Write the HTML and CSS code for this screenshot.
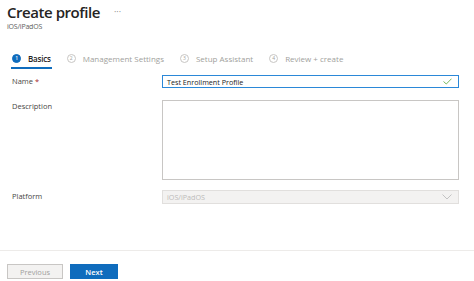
FILE: index.html
```html
<!DOCTYPE html>
<html lang="en">

<head>
    <meta charset="UTF-8">
    <meta name="viewport" content="width=device-width, initial-scale=1.0">
    <title>Create profile</title>
    <link rel="stylesheet" href="styles.css">
</head>

<body>
    <div class="header">
        <div class="title-row">
            <h1 class="title">Create profile</h1>
            <span class="more">&middot;&middot;&middot;</span>
        </div>
        <div class="subtitle">iOS/iPadOS</div>
    </div>

    <!-- 步骤条 -->
    <ul class="steps">
        <li class="step active"><span class="num">1</span>Basics</li>
        <li class="step"><span class="num">2</span>Management Settings</li>
        <li class="step"><span class="num">3</span>Setup Assistant</li>
        <li class="step"><span class="num">4</span>Review + create</li>
    </ul>

    <div class="form">
        <div class="row">
            <label class="label">Name <span class="req">*</span></label>
            <div class="field input valid">
                <span>Test Enrollment Profile</span>
                <svg class="check" width="9" height="7" viewBox="0 0 9 7"><path d="M0.5 3.5 L3.3 6 L8.5 0.7" fill="none" stroke="#6bb24a" stroke-width="0.9"/></svg>
            </div>
        </div>
        <div class="row">
            <label class="label">Description</label>
            <div class="field textarea"></div>
        </div>
        <div class="row">
            <label class="label">Platform</label>
            <div class="field input disabled">
                <span>iOS/iPadOS</span>
                <svg class="chev" width="10" height="6" viewBox="0 0 10 6"><path d="M0.5 0.5 L5 5 L9.5 0.5" fill="none" stroke="#bdbdbd" stroke-width="0.9"/></svg>
            </div>
        </div>
    </div>

    <div class="footer">
        <button class="btn prev" disabled>Previous</button>
        <button class="btn next">Next</button>
    </div>
</body>

</html>
```

FILE: styles.css
```css
* {
    margin: 0;
    padding: 0;
    box-sizing: border-box;
}

body {
    width: 474px;
    height: 281px;
    font-family: "Open Sans", "Noto Sans", sans-serif;
    font-size: 7.5px;
    color: #484644;
    background-color: #fff;
    overflow: hidden;
}

.header {
    padding: 2px 7px 0;
}

.title-row {
    display: flex;
    align-items: center;
}

.title {
    font-size: 15px;
    font-weight: 600;
    line-height: 20px;
    color: #252423;
    letter-spacing: -0.45px;
}

.more {
    margin-left: 14px;
    font-size: 9px;
    line-height: 8px;
    color: #8a8886;
}

.subtitle {
    font-size: 7px;
    line-height: 9px;
    color: #605e5c;
    letter-spacing: -0.2px;
}

.steps {
    list-style: none;
    display: flex;
    margin-top: 20px;
    padding-left: 12px;
    height: 24px;
}

.step {
    display: flex;
    align-items: center;
    height: 14px;
    margin-right: 16px;
    font-size: 8px;
    color: #a19f9d;
}

.step .num {
    display: inline-flex;
    align-items: center;
    justify-content: center;
    width: 9px;
    height: 9px;
    margin-right: 7px;
    border: 1px solid #c8c6c4;
    border-radius: 50%;
    font-size: 5px;
    color: #a19f9d;
}

.step.active {
    color: #252423;
    font-weight: 600;
    letter-spacing: -0.2px;
    position: relative;
}

.step.active .num {
    background-color: #0f6cbd;
    border-color: #0f6cbd;
    color: #fff;
}

/* 选中步骤的下划线 */
.step.active::after {
    content: "";
    position: absolute;
    left: -1px;
    right: -1px;
    bottom: -4px;
    height: 2px;
    background-color: #0f6cbd;
}

.form {
    padding-left: 12px;
}

.row {
    display: flex;
    align-items: flex-start;
    margin-bottom: 10px;
}

.row:first-child {
    margin-bottom: 12px;
}

.label {
    width: 150px;
    line-height: 13px;
}

.req {
    color: #a4262c;
}

.field {
    width: 297px;
    border: 1px solid #c8c6c4;
    background-color: #fff;
}

.input {
    display: flex;
    align-items: center;
    justify-content: space-between;
    height: 13px;
    padding: 0 6px 0 4px;
    font-size: 7.2px;
}

.input.valid {
    border-color: #2b88d8;
    color: #252423;
}

.textarea {
    height: 80px;
}

.input.disabled {
    height: 14px;
    background-color: #f3f2f1;
    border-color: #e1dfdd;
    color: #bcbbb9;
}

.footer {
    position: absolute;
    left: 0;
    right: 0;
    top: 250px;
    display: flex;
    gap: 7px;
    padding: 13px 7px 0;
    border-top: 1px solid #edebe9;
}

.btn {
    height: 15px;
    font-family: inherit;
    font-size: 7.5px;
    border: 1px solid #c8c6c4;
}

.prev {
    width: 56px;
    background-color: #f3f2f1;
    color: #a19f9d;
}

.next {
    width: 48px;
    background-color: #0f6cbd;
    border-color: #0f6cbd;
    color: #fff;
    font-weight: 600;
}
```
